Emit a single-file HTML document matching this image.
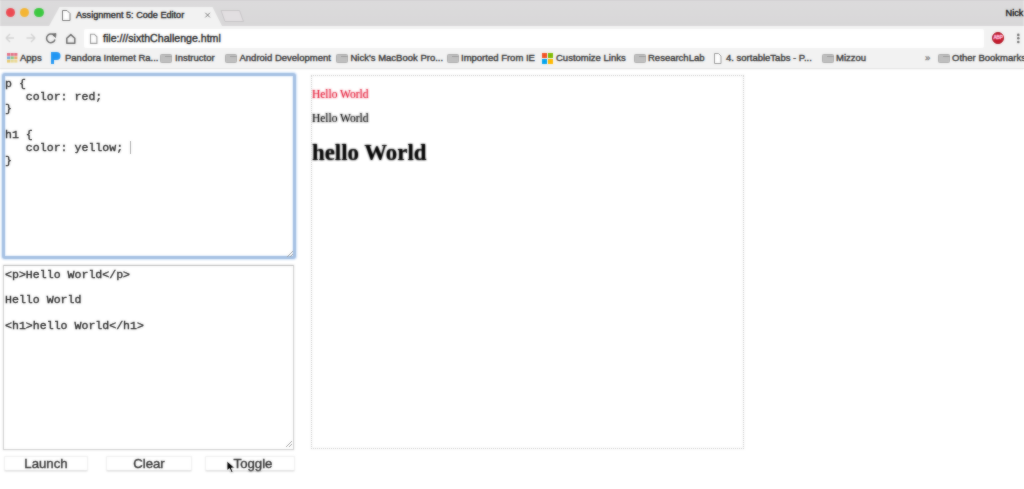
<!DOCTYPE html>
<html><head><meta charset="utf-8">
<style>
*{box-sizing:border-box;margin:0;padding:0}
html,body{width:1024px;height:489px;overflow:hidden;background:#fff;font-family:"Liberation Sans",sans-serif;position:relative}
.a{position:absolute}
.a{-webkit-text-stroke:0.35px currentColor}
#wrap{position:absolute;left:0;top:0;width:1024px;height:489px;filter:blur(1px)}
#wrap2{position:absolute;left:0;top:0;width:1024px;height:489px;opacity:0.5}
#tabbar{left:0;top:0;width:1024px;height:26px;background:linear-gradient(#dcdbdc,#d8d7d8);border-top:1px solid #c8c7c8}
.dot{width:9.4px;height:9.4px;border-radius:50%;top:7.6px}
#toolbar{left:0;top:25.6px;width:1024px;height:43.4px;background:#f2f2f2;border-bottom:1px solid #e2e2e2}
.bm{font-size:9.5px;color:#333;top:52px;line-height:12px;white-space:nowrap}
.fold{top:53.6px;width:12px;height:9.4px;background:#bfbfbf;border:1px solid #acacac;border-radius:1.5px}.fold:after{content:"";position:absolute;left:4px;top:1px;width:6.5px;height:1.6px;background:#9c9c9c}
#ta1{left:2px;top:73px;width:294px;height:186px;border:3px solid #a5c0e3;box-shadow:0 0 0 0.8px #dbeafb,inset 0 0 0 0.8px #e6f1fc;border-radius:3px;background:#fff}
#ta2{left:2.5px;top:265.3px;width:291.5px;height:184.4px;border:1px solid #cfcfcf;border-top-color:#bdbdbd;background:#fff}
.mono{font-family:"Liberation Mono",monospace;font-size:11.58px;line-height:12.9px;color:#262626;white-space:pre;-webkit-text-stroke:0.35px #262626}
#out{left:310.5px;top:75px;width:433px;height:374px;border:1px dotted #cfcfcf}
.btn{top:456px;height:15.3px;border:1px solid #f0f0f0;border-bottom-color:#e2e2e2;box-shadow:0 0.5px 1px rgba(0,0,0,0.05);background:#fff;border-radius:2px;font-size:13.2px;line-height:13px;text-align:center;color:#333;-webkit-text-stroke:0.4px #333}
</style></head>
<body><div id="wrap">
<div id="tabbar" class="a"></div>
<div class="a dot" style="left:5.5px;background:#ec4a52"></div>
<div class="a dot" style="left:19.8px;background:#f4b532"></div>
<div class="a dot" style="left:34.4px;background:#3cc841"></div>
<svg class="a" style="left:0;top:0" width="260" height="26">
  <path d="M49 26 L59.5 7 L212.5 7 L222 26 Z" fill="#f2f2f2"/>
  <path d="M221 10.5 L239.5 10.5 L243.5 21.5 L225 21.5 Z" fill="#e2dfe1" stroke="#c4c2c4" stroke-width="0.9" stroke-linejoin="round"/>
  <path d="M62.5 10.5 h4.5 l3 3 v7 h-7.5 z" fill="#fff" stroke="#777" stroke-width="1"/>
  <path d="M205.3 12.8 l4.6 4.6 M209.9 12.8 l-4.6 4.6" stroke="#7a7a7a" stroke-width="1"/>
</svg>
<div class="a" style="left:76px;top:9.2px;font-size:9.1px;color:#222;line-height:12px;white-space:nowrap">Assignment 5: Code Editor</div>
<div class="a" style="left:1005.5px;top:7.2px;font-size:9.2px;color:#111;line-height:12px;-webkit-text-stroke:0.35px #111">Nick</div>

<div id="toolbar" class="a"></div>
<div class="a" style="left:84px;top:29px;width:900px;height:19px;background:#fff;border-radius:2px"></div>
<svg class="a" style="left:0;top:28px" width="110" height="22">
  <path d="M6 10 h8 M6 10 l4 -4 M6 10 l4 4" stroke="#d2d2d2" stroke-width="1.4" fill="none"/>
  <path d="M35 10 h-8.5 M35 10 l-4 -4 M35 10 l-4 4" stroke="#d2d2d2" stroke-width="1.4" fill="none"/>
  <path d="M54.6 8.2 A4.3 4.3 0 1 0 55 11.5" stroke="#6a6a6a" stroke-width="1.5" fill="none"/>
  <path d="M52 6 L56 5.5 L55.5 9.5 Z" fill="#6a6a6a" stroke="#6a6a6a" stroke-width="0.8"/>
  <path d="M66.8 15.3 V10.3 L70.8 6.6 L74.8 10.3 V15.3 Z" stroke="#6a6a6a" stroke-width="1.5" fill="none" stroke-linejoin="round"/>
  <path d="M90.5 6.2 h3.8 l2.6 2.6 v6.6 h-6.4 z" fill="#fff" stroke="#9a9a9a" stroke-width="1.1"/>
</svg>
<div class="a" style="left:103px;top:32px;font-size:10.6px;color:#222;line-height:13px;white-space:nowrap">file:///sixthChallenge.html</div>
<div class="a" style="left:992.1px;top:32.2px;width:11.8px;height:11.8px;border-radius:50%;background:#c41a2c;border:0.8px solid #a8101f;color:#fbd;font-size:4.6px;line-height:10.5px;text-align:center;font-weight:bold;letter-spacing:-0.2px">ABP</div>
<svg class="a" style="left:1014px;top:32px" width="8" height="14">
  <circle cx="4.3" cy="2.9" r="1.3" fill="#707070"/><circle cx="4.3" cy="6.3" r="1.3" fill="#707070"/><circle cx="4.3" cy="10" r="1.3" fill="#707070"/>
</svg>

<!-- bookmarks -->
<svg class="a" style="left:6.5px;top:53px" width="11" height="10">
  <rect x="0" y="0" width="3.2" height="2.8" fill="#e46a80"/><rect x="3.6" y="0" width="3.2" height="2.8" fill="#e46a80"/><rect x="7.2" y="0" width="3.2" height="2.8" fill="#e46a80"/>
  <rect x="0" y="3.4" width="3.2" height="2.8" fill="#74a8dc"/><rect x="3.6" y="3.4" width="3.2" height="2.8" fill="#84c684"/><rect x="7.2" y="3.4" width="3.2" height="2.8" fill="#e8a868"/>
  <rect x="0" y="6.8" width="3.2" height="2.8" fill="#e8c868"/><rect x="3.6" y="6.8" width="3.2" height="2.8" fill="#e8d890"/><rect x="7.2" y="6.8" width="3.2" height="2.8" fill="#ead890"/>
</svg>
<div class="a bm" style="left:20px">Apps</div>
<svg class="a" style="left:50px;top:51px" width="12" height="14">
  <path d="M1 1 h5.5 a4 4 0 0 1 0 8 h-2.5 v4 h-3 z" fill="#2196f3"/>
</svg>
<div class="a bm" style="left:65px">Pandora Internet Ra...</div>
<div class="a fold" style="left:160px"></div>
<div class="a bm" style="left:175px">Instructor</div>
<div class="a fold" style="left:225px"></div>
<div class="a bm" style="left:239.5px">Android Development</div>
<div class="a fold" style="left:336px"></div>
<div class="a bm" style="left:350.5px">Nick's MacBook Pro...</div>
<div class="a fold" style="left:447px"></div>
<div class="a bm" style="left:461px">Imported From IE</div>
<svg class="a" style="left:542px;top:53px" width="11" height="11">
  <rect x="0" y="0" width="5" height="5" fill="#f25022"/><rect x="6" y="0" width="5" height="5" fill="#7fba00"/>
  <rect x="0" y="6" width="5" height="5" fill="#00a4ef"/><rect x="6" y="6" width="5" height="5" fill="#ffb900"/>
</svg>
<div class="a bm" style="left:556px">Customize Links</div>
<div class="a fold" style="left:634px"></div>
<div class="a bm" style="left:648px">ResearchLab</div>
<svg class="a" style="left:713px;top:53px" width="9" height="11">
  <path d="M1.5 0.5 h4 l2.5 2.5 v7.5 h-6.5 z" fill="#fff" stroke="#999" stroke-width="1"/>
</svg>
<div class="a bm" style="left:726px">4. sortableTabs - P...</div>
<div class="a fold" style="left:822px"></div>
<div class="a bm" style="left:836px">Mizzou</div>
<div class="a bm" style="left:925px;color:#777">»</div>
<div class="a fold" style="left:938px"></div>
<div class="a bm" style="left:952px">Other Bookmarks</div>

<!-- page -->
<div id="ta1" class="a"></div>
<div class="a mono" style="left:5px;top:77.6px">p {
   color: red;
}

h1 {
   color: yellow; 
}</div>
<div class="a" style="left:129.5px;top:141px;width:1.2px;height:12.5px;background:#a8a8a8"></div>
<div id="ta2" class="a"></div>
<div class="a mono" style="left:5px;top:268.6px">&lt;p&gt;Hello World&lt;/p&gt;

Hello World

&lt;h1&gt;hello World&lt;/h1&gt;</div>

<div id="out" class="a"></div>
<div class="a" style="left:312px;top:88px;font-family:'Liberation Serif',serif;font-size:11.46px;color:#e4122f;line-height:13px;-webkit-text-stroke:0">Hello World</div>
<div class="a" style="left:312px;top:112.3px;font-family:'Liberation Serif',serif;font-size:11.46px;color:#000;line-height:13px;-webkit-text-stroke:0">Hello World</div>
<div class="a" style="left:312px;top:140px;font-family:'Liberation Serif',serif;font-size:22.85px;font-weight:bold;color:#000;line-height:26px;-webkit-text-stroke:0">hello World</div>

<div class="a btn" style="left:4px;width:84px">Launch</div>
<div class="a btn" style="left:106px;width:86px">Clear</div>
<div class="a btn" style="left:205px;width:90px;padding-left:6px">Toggle</div>

<svg class="a" style="left:285px;top:249px" width="9" height="9"><path d="M2 8 L8 2 M5 8 L8 5" stroke="#9a9a9a" stroke-width="0.9"/></svg>
<svg class="a" style="left:284px;top:439px" width="9" height="9"><path d="M2 8 L8 2 M5 8 L8 5" stroke="#9a9a9a" stroke-width="0.9"/></svg>
<svg class="a" style="left:225.5px;top:459.5px" width="10" height="15"><path d="M1 1 L1 10.5 L3.5 8.6 L5.3 12.6 L7.1 11.8 L5.4 8 L8.8 8 Z" fill="#000" stroke="#fff" stroke-width="0.8" stroke-linejoin="round"/></svg>
</div><div id="wrap2">
<div id="tabbar" class="a"></div>
<div class="a dot" style="left:5.5px;background:#ec4a52"></div>
<div class="a dot" style="left:19.8px;background:#f4b532"></div>
<div class="a dot" style="left:34.4px;background:#3cc841"></div>
<svg class="a" style="left:0;top:0" width="260" height="26">
  <path d="M49 26 L59.5 7 L212.5 7 L222 26 Z" fill="#f2f2f2"/>
  <path d="M221 10.5 L239.5 10.5 L243.5 21.5 L225 21.5 Z" fill="#e2dfe1" stroke="#c4c2c4" stroke-width="0.9" stroke-linejoin="round"/>
  <path d="M62.5 10.5 h4.5 l3 3 v7 h-7.5 z" fill="#fff" stroke="#777" stroke-width="1"/>
  <path d="M205.3 12.8 l4.6 4.6 M209.9 12.8 l-4.6 4.6" stroke="#7a7a7a" stroke-width="1"/>
</svg>
<div class="a" style="left:76px;top:9.2px;font-size:9.1px;color:#222;line-height:12px;white-space:nowrap">Assignment 5: Code Editor</div>
<div class="a" style="left:1005.5px;top:7.2px;font-size:9.2px;color:#111;line-height:12px;-webkit-text-stroke:0.35px #111">Nick</div>

<div id="toolbar" class="a"></div>
<div class="a" style="left:84px;top:29px;width:900px;height:19px;background:#fff;border-radius:2px"></div>
<svg class="a" style="left:0;top:28px" width="110" height="22">
  <path d="M6 10 h8 M6 10 l4 -4 M6 10 l4 4" stroke="#d2d2d2" stroke-width="1.4" fill="none"/>
  <path d="M35 10 h-8.5 M35 10 l-4 -4 M35 10 l-4 4" stroke="#d2d2d2" stroke-width="1.4" fill="none"/>
  <path d="M54.6 8.2 A4.3 4.3 0 1 0 55 11.5" stroke="#6a6a6a" stroke-width="1.5" fill="none"/>
  <path d="M52 6 L56 5.5 L55.5 9.5 Z" fill="#6a6a6a" stroke="#6a6a6a" stroke-width="0.8"/>
  <path d="M66.8 15.3 V10.3 L70.8 6.6 L74.8 10.3 V15.3 Z" stroke="#6a6a6a" stroke-width="1.5" fill="none" stroke-linejoin="round"/>
  <path d="M90.5 6.2 h3.8 l2.6 2.6 v6.6 h-6.4 z" fill="#fff" stroke="#9a9a9a" stroke-width="1.1"/>
</svg>
<div class="a" style="left:103px;top:32px;font-size:10.6px;color:#222;line-height:13px;white-space:nowrap">file:///sixthChallenge.html</div>
<div class="a" style="left:992.1px;top:32.2px;width:11.8px;height:11.8px;border-radius:50%;background:#c41a2c;border:0.8px solid #a8101f;color:#fbd;font-size:4.6px;line-height:10.5px;text-align:center;font-weight:bold;letter-spacing:-0.2px">ABP</div>
<svg class="a" style="left:1014px;top:32px" width="8" height="14">
  <circle cx="4.3" cy="2.9" r="1.3" fill="#707070"/><circle cx="4.3" cy="6.3" r="1.3" fill="#707070"/><circle cx="4.3" cy="10" r="1.3" fill="#707070"/>
</svg>

<!-- bookmarks -->
<svg class="a" style="left:6.5px;top:53px" width="11" height="10">
  <rect x="0" y="0" width="3.2" height="2.8" fill="#e46a80"/><rect x="3.6" y="0" width="3.2" height="2.8" fill="#e46a80"/><rect x="7.2" y="0" width="3.2" height="2.8" fill="#e46a80"/>
  <rect x="0" y="3.4" width="3.2" height="2.8" fill="#74a8dc"/><rect x="3.6" y="3.4" width="3.2" height="2.8" fill="#84c684"/><rect x="7.2" y="3.4" width="3.2" height="2.8" fill="#e8a868"/>
  <rect x="0" y="6.8" width="3.2" height="2.8" fill="#e8c868"/><rect x="3.6" y="6.8" width="3.2" height="2.8" fill="#e8d890"/><rect x="7.2" y="6.8" width="3.2" height="2.8" fill="#ead890"/>
</svg>
<div class="a bm" style="left:20px">Apps</div>
<svg class="a" style="left:50px;top:51px" width="12" height="14">
  <path d="M1 1 h5.5 a4 4 0 0 1 0 8 h-2.5 v4 h-3 z" fill="#2196f3"/>
</svg>
<div class="a bm" style="left:65px">Pandora Internet Ra...</div>
<div class="a fold" style="left:160px"></div>
<div class="a bm" style="left:175px">Instructor</div>
<div class="a fold" style="left:225px"></div>
<div class="a bm" style="left:239.5px">Android Development</div>
<div class="a fold" style="left:336px"></div>
<div class="a bm" style="left:350.5px">Nick's MacBook Pro...</div>
<div class="a fold" style="left:447px"></div>
<div class="a bm" style="left:461px">Imported From IE</div>
<svg class="a" style="left:542px;top:53px" width="11" height="11">
  <rect x="0" y="0" width="5" height="5" fill="#f25022"/><rect x="6" y="0" width="5" height="5" fill="#7fba00"/>
  <rect x="0" y="6" width="5" height="5" fill="#00a4ef"/><rect x="6" y="6" width="5" height="5" fill="#ffb900"/>
</svg>
<div class="a bm" style="left:556px">Customize Links</div>
<div class="a fold" style="left:634px"></div>
<div class="a bm" style="left:648px">ResearchLab</div>
<svg class="a" style="left:713px;top:53px" width="9" height="11">
  <path d="M1.5 0.5 h4 l2.5 2.5 v7.5 h-6.5 z" fill="#fff" stroke="#999" stroke-width="1"/>
</svg>
<div class="a bm" style="left:726px">4. sortableTabs - P...</div>
<div class="a fold" style="left:822px"></div>
<div class="a bm" style="left:836px">Mizzou</div>
<div class="a bm" style="left:925px;color:#777">»</div>
<div class="a fold" style="left:938px"></div>
<div class="a bm" style="left:952px">Other Bookmarks</div>

<!-- page -->
<div id="ta1" class="a"></div>
<div class="a mono" style="left:5px;top:77.6px">p {
   color: red;
}

h1 {
   color: yellow; 
}</div>
<div class="a" style="left:129.5px;top:141px;width:1.2px;height:12.5px;background:#a8a8a8"></div>
<div id="ta2" class="a"></div>
<div class="a mono" style="left:5px;top:268.6px">&lt;p&gt;Hello World&lt;/p&gt;

Hello World

&lt;h1&gt;hello World&lt;/h1&gt;</div>

<div id="out" class="a"></div>
<div class="a" style="left:312px;top:88px;font-family:'Liberation Serif',serif;font-size:11.46px;color:#e4122f;line-height:13px;-webkit-text-stroke:0">Hello World</div>
<div class="a" style="left:312px;top:112.3px;font-family:'Liberation Serif',serif;font-size:11.46px;color:#000;line-height:13px;-webkit-text-stroke:0">Hello World</div>
<div class="a" style="left:312px;top:140px;font-family:'Liberation Serif',serif;font-size:22.85px;font-weight:bold;color:#000;line-height:26px;-webkit-text-stroke:0">hello World</div>

<div class="a btn" style="left:4px;width:84px">Launch</div>
<div class="a btn" style="left:106px;width:86px">Clear</div>
<div class="a btn" style="left:205px;width:90px;padding-left:6px">Toggle</div>

<svg class="a" style="left:285px;top:249px" width="9" height="9"><path d="M2 8 L8 2 M5 8 L8 5" stroke="#9a9a9a" stroke-width="0.9"/></svg>
<svg class="a" style="left:284px;top:439px" width="9" height="9"><path d="M2 8 L8 2 M5 8 L8 5" stroke="#9a9a9a" stroke-width="0.9"/></svg>
<svg class="a" style="left:225.5px;top:459.5px" width="10" height="15"><path d="M1 1 L1 10.5 L3.5 8.6 L5.3 12.6 L7.1 11.8 L5.4 8 L8.8 8 Z" fill="#000" stroke="#fff" stroke-width="0.8" stroke-linejoin="round"/></svg>
</div></body></html>
